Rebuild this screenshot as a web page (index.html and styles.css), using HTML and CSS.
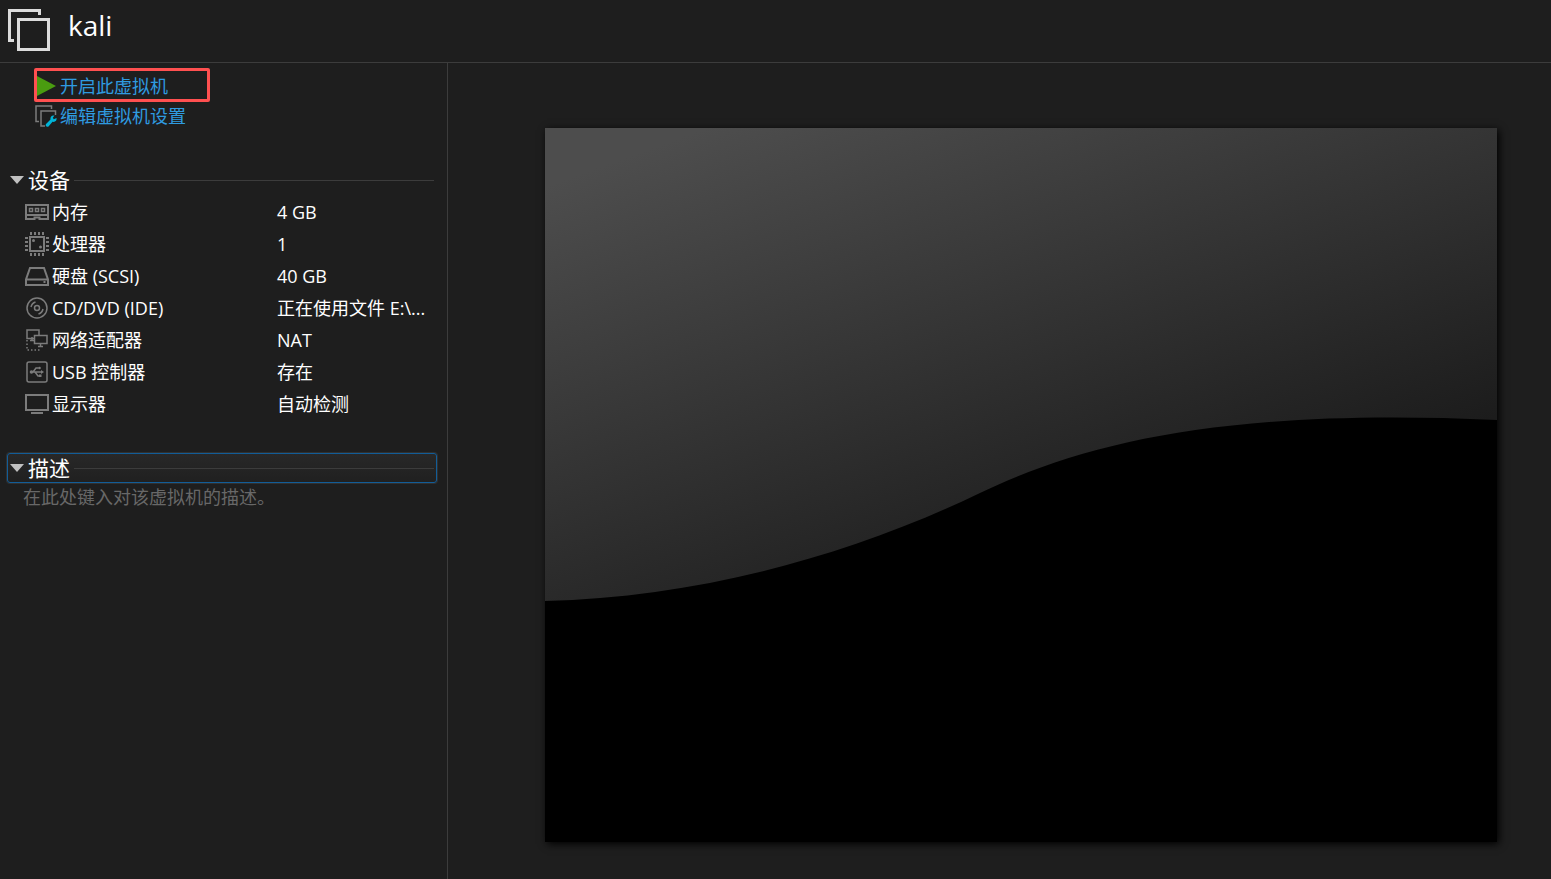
FILE: index.html
```html
<!DOCTYPE html>
<html lang="zh-CN">
<head>
    <meta charset="UTF-8">
    <meta name="viewport" content="width=device-width, initial-scale=1.0">
    <title>kali</title>
    <link rel="stylesheet" href="styles.css">
</head>
<body>
    <header class="header">
        <svg class="vm-icon" viewBox="0 0 44 44">
            <path d="M32.500 7V2.500H2.500V32.500H7" />
            <rect x="11.500" y="11.500" width="30" height="30" />
        </svg>
        <h1>kali</h1>
    </header>

    <div class="content">
        <aside class="sidebar">
            <nav class="actions">
                <a href="#" class="action highlighted">
                    <svg class="icon" viewBox="0 0 24 24"><path class="play" d="M2 2L21 12L2 22z" /></svg>
                    <span>开启此虚拟机</span>
                </a>
                <a href="#" class="action">
                    <svg class="icon" viewBox="0 0 24 24">
                        <path class="thin" d="M16.500 5V2H1V17.500H4" />
                        <path class="thin" d="M20.500 11V7H6V22H10" />
                        <path class="wrench" d="M11 20L15.500 15.500C15 13 16.500 11 19.500 11.500L17.800 13.800L18.800 15.300L21.500 14C22 16.500 20.500 18.300 17.500 17.800L13.500 22.500C12 23.700 9.800 21.700 11 20z" />
                    </svg>
                    <span>编辑虚拟机设置</span>
                </a>
            </nav>

            <section class="section">
                <h2>
                    <button type="button" class="section-title">
                        <span class="arrow"></span>设备<span class="line"></span>
                    </button>
                </h2>
                <table class="devices">
                    <tr>
                        <th scope="row">
                            <svg class="icon" viewBox="0 0 24 24">
                                <path d="M1 5H23V15H1zM1 15V19H9.500V17.500H14.500V19H23V15" />
                                <path class="thin" d="M4.500 8.500H7.500V11.500H4.500zM10.500 8.500H13.500V11.500H10.500zM16.500 8.500H19.500V11.500H16.500z" />
                            </svg>内存
                        </th>
                        <td>4 GB</td>
                    </tr>
                    <tr>
                        <th scope="row">
                            <svg class="icon" viewBox="0 0 24 24">
                                <rect x="5" y="5" width="14" height="14" />
                                <path d="M6 0V3M10 0V3M14 0V3M18 0V3M6 21V24M10 21V24M14 21V24M18 21V24M0 6H3M0 10H3M0 14H3M0 18H3M21 6H24M21 10H24M21 14H24M21 18H24" />
                                <circle class="dot" cx="8.500" cy="8.500" r="1.500" />
                                <circle class="dot" cx="15.500" cy="15" r="1.500" />
                            </svg>处理器
                        </th>
                        <td>1</td>
                    </tr>
                    <tr>
                        <th scope="row">
                            <svg class="icon" viewBox="0 0 24 24">
                                <path d="M5 4H19L23 15.500V21H1V15.500zM1 15.500H23" />
                                <rect class="dot" x="18.500" y="17" width="2" height="2" />
                            </svg>硬盘 (SCSI)
                        </th>
                        <td>40 GB</td>
                    </tr>
                    <tr>
                        <th scope="row">
                            <svg class="icon" viewBox="0 0 24 24">
                                <circle class="thin" cx="12" cy="12" r="10" />
                                <circle class="thin" cx="12" cy="12" r="2.500" />
                                <path class="thin" d="M6 11C6.500 8.500 8 6.800 10.500 6M18 13C17.500 15.500 16 17.200 13.500 18" />
                            </svg>CD/DVD (IDE)
                        </th>
                        <td>正在使用文件 E:\...</td>
                    </tr>
                    <tr>
                        <th scope="row">
                            <svg class="icon" viewBox="0 0 24 24">
                                <path class="thin" d="M9 10.500H2V2H14V7M9.500 7.500H22V15.500H9.500zM15.500 15.500V18.500M13 18.500H18M7 9V12.500M5 12.500H9" />
                                <path class="thin dotted" d="M2 12V22H16" />
                            </svg>网络适配器
                        </th>
                        <td>NAT</td>
                    </tr>
                    <tr>
                        <th scope="row">
                            <svg class="icon" viewBox="0 0 24 24">
                                <rect class="thin" x="2" y="2" width="20" height="20" rx="2" />
                                <path class="thin" d="M6 12H17M8 12L11 8H13.500M10 12L13 16H15" />
                                <circle class="dot" cx="6.500" cy="12" r="1.800" />
                                <circle class="dot" cx="14.500" cy="8" r="1.300" />
                                <path class="dot" d="M14 14.500H16.500V17H14zM16 10L19 12L16 14z" />
                            </svg>USB 控制器
                        </th>
                        <td>存在</td>
                    </tr>
                    <tr>
                        <th scope="row">
                            <svg class="icon" viewBox="0 0 24 24">
                                <path d="M1 3H23V18H1zM6 21H18" />
                            </svg>显示器
                        </th>
                        <td>自动检测</td>
                    </tr>
                </table>
            </section>

            <section class="section">
                <h2>
                    <button type="button" class="section-title active">
                        <span class="arrow"></span>描述<span class="line"></span>
                    </button>
                </h2>
                <textarea class="description" rows="3" aria-label="描述" placeholder="在此处键入对该虚拟机的描述。"></textarea>
            </section>
        </aside>

        <main class="preview">
            <svg class="screen" viewBox="0 0 952 714">
                <defs>
                    <linearGradient id="glass" gradientUnits="userSpaceOnUse" x1="19" y1="52" x2="203" y2="560">
                        <stop offset="0" stop-color="#4d4d4d" />
                        <stop offset="1" stop-color="#1c1c1c" />
                    </linearGradient>
                </defs>
                <rect width="952" height="714" fill="url(#glass)" />
                <path d="M0 473C150 469 300 430 435 365C545 312 690 280 952 292V714H0z" />
            </svg>
        </main>
    </div>
</body>
</html>
```

FILE: styles.css
```css
/* Base */
* {
    margin: 0;
    padding: 0;
    box-sizing: border-box;
}

body {
    display: flex;
    flex-direction: column;
    min-height: 100vh;
    background-color: #1e1e1e;
    color: #ffffff;
    font-family: "Open Sans", "Noto Sans CJK SC", sans-serif;
    font-size: 18px;
    line-height: 30px;
}

/* Header */
.header {
    display: flex;
    gap: 17px;
    padding: 8px 7px 10px;
    border-bottom: 1px solid #3c3c3c;
}

.vm-icon {
    width: 44px;
    height: 44px;
    fill: none;
    stroke: #dcdcdc;
    stroke-width: 3;
}

h1 {
    font-size: 28px;
    font-weight: 400;
    line-height: 34px;
}

.content {
    display: flex;
    flex: 1;
}

/* Sidebar */
.sidebar {
    flex: 0 0 448px;
    padding: 8px 10px 8px 7px;
    border-right: 1px solid #3c3c3c;
}

.actions {
    display: flex;
    flex-direction: column;
    align-items: flex-start;
    padding: 0 0 1px 28px;
}

.action {
    display: flex;
    align-items: center;
    gap: 1px;
    position: relative;
    color: #2f9be0;
    text-decoration: none;
}

.action:hover {
    text-decoration: underline;
}

.highlighted::after {
    content: "";
    position: absolute;
    top: -3px;
    left: -1px;
    width: 176px;
    height: 34px;
    box-sizing: border-box;
    border: 3px solid #ff5050;
    border-radius: 2px;
}

/* Icons */
.icon {
    flex: none;
    width: 24px;
    height: 24px;
    fill: none;
    stroke: #7c7c7c;
    stroke-width: 2;
}

.thin {
    stroke-width: 1.5;
}

.dotted {
    stroke-dasharray: 1.5 2;
}

.dot {
    fill: #7c7c7c;
    stroke: none;
}

.play {
    fill: #4a9c10;
    stroke: none;
}

.wrench {
    fill: #00b4d8;
    stroke: none;
}

/* Sections */
.section {
    margin-top: 33px;
}

.section-title {
    display: flex;
    align-items: center;
    gap: 4px;
    width: 100%;
    height: 30px;
    padding: 0 2px;
    border: 1px solid transparent;
    border-radius: 3px;
    background: none;
    color: #ffffff;
    font-family: inherit;
    font-size: 21px;
    line-height: 28px;
    cursor: pointer;
}

.section-title.active {
    border-color: #125d98;
    background: linear-gradient(#282828, #202020);
    box-shadow: 0 0 0 1px #303030;
}

.arrow {
    border: 7px solid transparent;
    border-top: 8px solid #c0c0c0;
    border-bottom: 0;
}

.line {
    flex: 1;
    height: 1px;
    background-color: #3c3c3c;
}

/* Device list */
.devices {
    width: 100%;
    margin-top: 1px;
    border-collapse: collapse;
    table-layout: fixed;
}

.devices tr {
    height: 32px;
}

.devices th {
    width: 270px;
    padding-left: 18px;
    font-weight: 400;
    text-align: left;
}

.devices td {
    white-space: nowrap;
}

.devices .icon {
    margin-right: 3px;
    vertical-align: -5px;
}

.description {
    display: block;
    width: 100%;
    padding: 0 16px;
    border: none;
    outline: none;
    resize: none;
    background: none;
    color: #ffffff;
    font: inherit;
    line-height: 28px;
}

.description::placeholder {
    color: #686868;
    opacity: 1;
}

/* Screen preview */
.preview {
    flex: 1;
    padding: 65px 54px 37px 97px;
}

.screen {
    display: block;
    width: 100%;
    box-shadow: 2px 2px 8px #000000;
}
```
